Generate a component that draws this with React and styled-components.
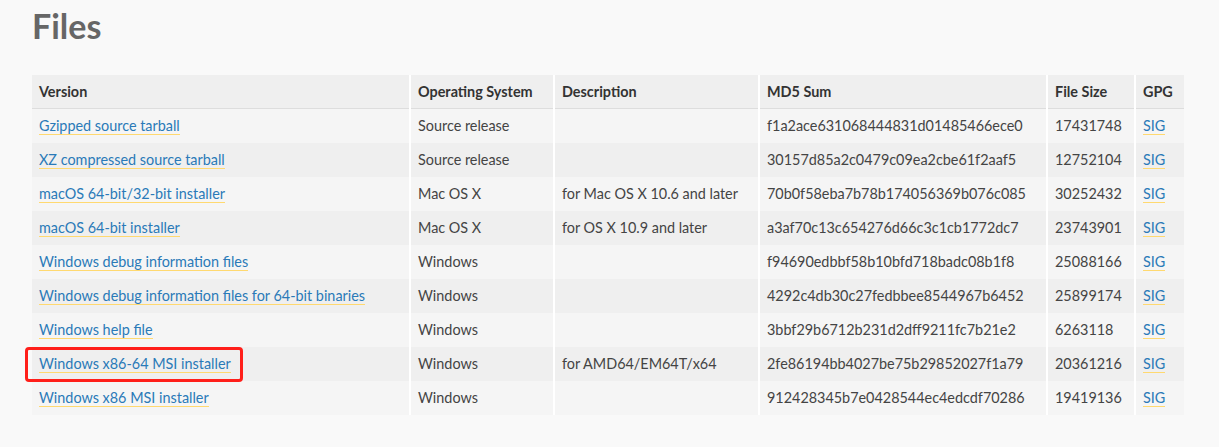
import React from 'react';
import styled, { createGlobalStyle } from 'styled-components';

const GlobalStyle = createGlobalStyle`
  body {
    margin: 0;
    background: #f9f9f9;
    font-family: Lato, "Liberation Sans", sans-serif;
  }
`

const Page = styled.div`
  padding: 0 35px 0 32px;
`

const Title = styled.h1`
  margin: 0;
  padding-top: 5px;
  height: 70px;
  font-size: 34px;
  line-height: 42px;
  font-weight: 700;
  color: #666;
`

const Table = styled.table`
  width: 1152px;
  table-layout: fixed;
  border-collapse: collapse;
  font-size: 14.4px;
  color: #444;
`

const HeadCell = styled.th`
  height: 32px;
  padding: 0 0 1px 7px;
  text-align: left;
  font-weight: 700;
  color: #333;
  background: #efefef;
  border-bottom: 1px solid #ddd;
  & + & {
    border-left: 2px solid #fff;
  }
`

const Row = styled.tr`
  background: ${p => (p.$odd ? '#f5f5f5' : '#efefef')};
`

const Cell = styled.td`
  position: relative;
  height: 33px;
  padding: 0 0 1px 7px;
  white-space: nowrap;
  & + & {
    border-left: 2px solid #fff;
  }
  &.marked::after {
    content: '';
    position: absolute;
    top: 0;
    left: -7px;
    width: 218px;
    height: 35px;
    box-sizing: border-box;
    border: 3px solid #ff1f1a;
    border-radius: 4px;
  }
`

const Link = styled.a`
  color: #2a7ab8;
  text-decoration: none;
  border-bottom: 1px solid #ffd970;
`

const columns = [
  ['Version', 378],
  ['Operating System', 144],
  ['Description', 205],
  ['MD5 Sum', 288],
  ['File Size', 88],
  ['GPG', 49],
]

const files = [
  ['Gzipped source tarball', 'Source release', '', 'f1a2ace631068444831d01485466ece0', '17431748'],
  ['XZ compressed source tarball', 'Source release', '', '30157d85a2c0479c09ea2cbe61f2aaf5', '12752104'],
  ['macOS 64-bit/32-bit installer', 'Mac OS X', 'for Mac OS X 10.6 and later', '70b0f58eba7b78b174056369b076c085', '30252432'],
  ['macOS 64-bit installer', 'Mac OS X', 'for OS X 10.9 and later', 'a3af70c13c654276d66c3c1cb1772dc7', '23743901'],
  ['Windows debug information files', 'Windows', '', 'f94690edbbf58b10bfd718badc08b1f8', '25088166'],
  ['Windows debug information files for 64-bit binaries', 'Windows', '', '4292c4db30c27fedbbee8544967b6452', '25899174'],
  ['Windows help file', 'Windows', '', '3bbf29b6712b231d2dff9211fc7b21e2', '6263118'],
  ['Windows x86-64 MSI installer', 'Windows', 'for AMD64/EM64T/x64', '2fe86194bb4027be75b29852027f1a79', '20361216'],
  ['Windows x86 MSI installer', 'Windows', '', '912428345b7e0428544ec4edcdf70286', '19419136'],
]

export default function App() {
  return (
    <Page>
      <GlobalStyle />
      <Title>Files</Title>
      <Table>
        <colgroup>
          {columns.map(([name, w]) => <col key={name} style={{ width: w }} />)}
        </colgroup>
        <thead>
          <tr>
            {columns.map(([name]) => <HeadCell key={name}>{name}</HeadCell>)}
          </tr>
        </thead>
        <tbody>
          {files.map(([version, os, desc, md5, size], i) => (
            <Row key={version} $odd={i % 2 === 0}>
              <Cell className={i === 7 ? 'marked' : ''}><Link href="#">{version}</Link></Cell>
              <Cell>{os}</Cell>
              <Cell>{desc}</Cell>
              <Cell>{md5}</Cell>
              <Cell>{size}</Cell>
              <Cell><Link href="#">SIG</Link></Cell>
            </Row>
          ))}
        </tbody>
      </Table>
    </Page>
  )
}
